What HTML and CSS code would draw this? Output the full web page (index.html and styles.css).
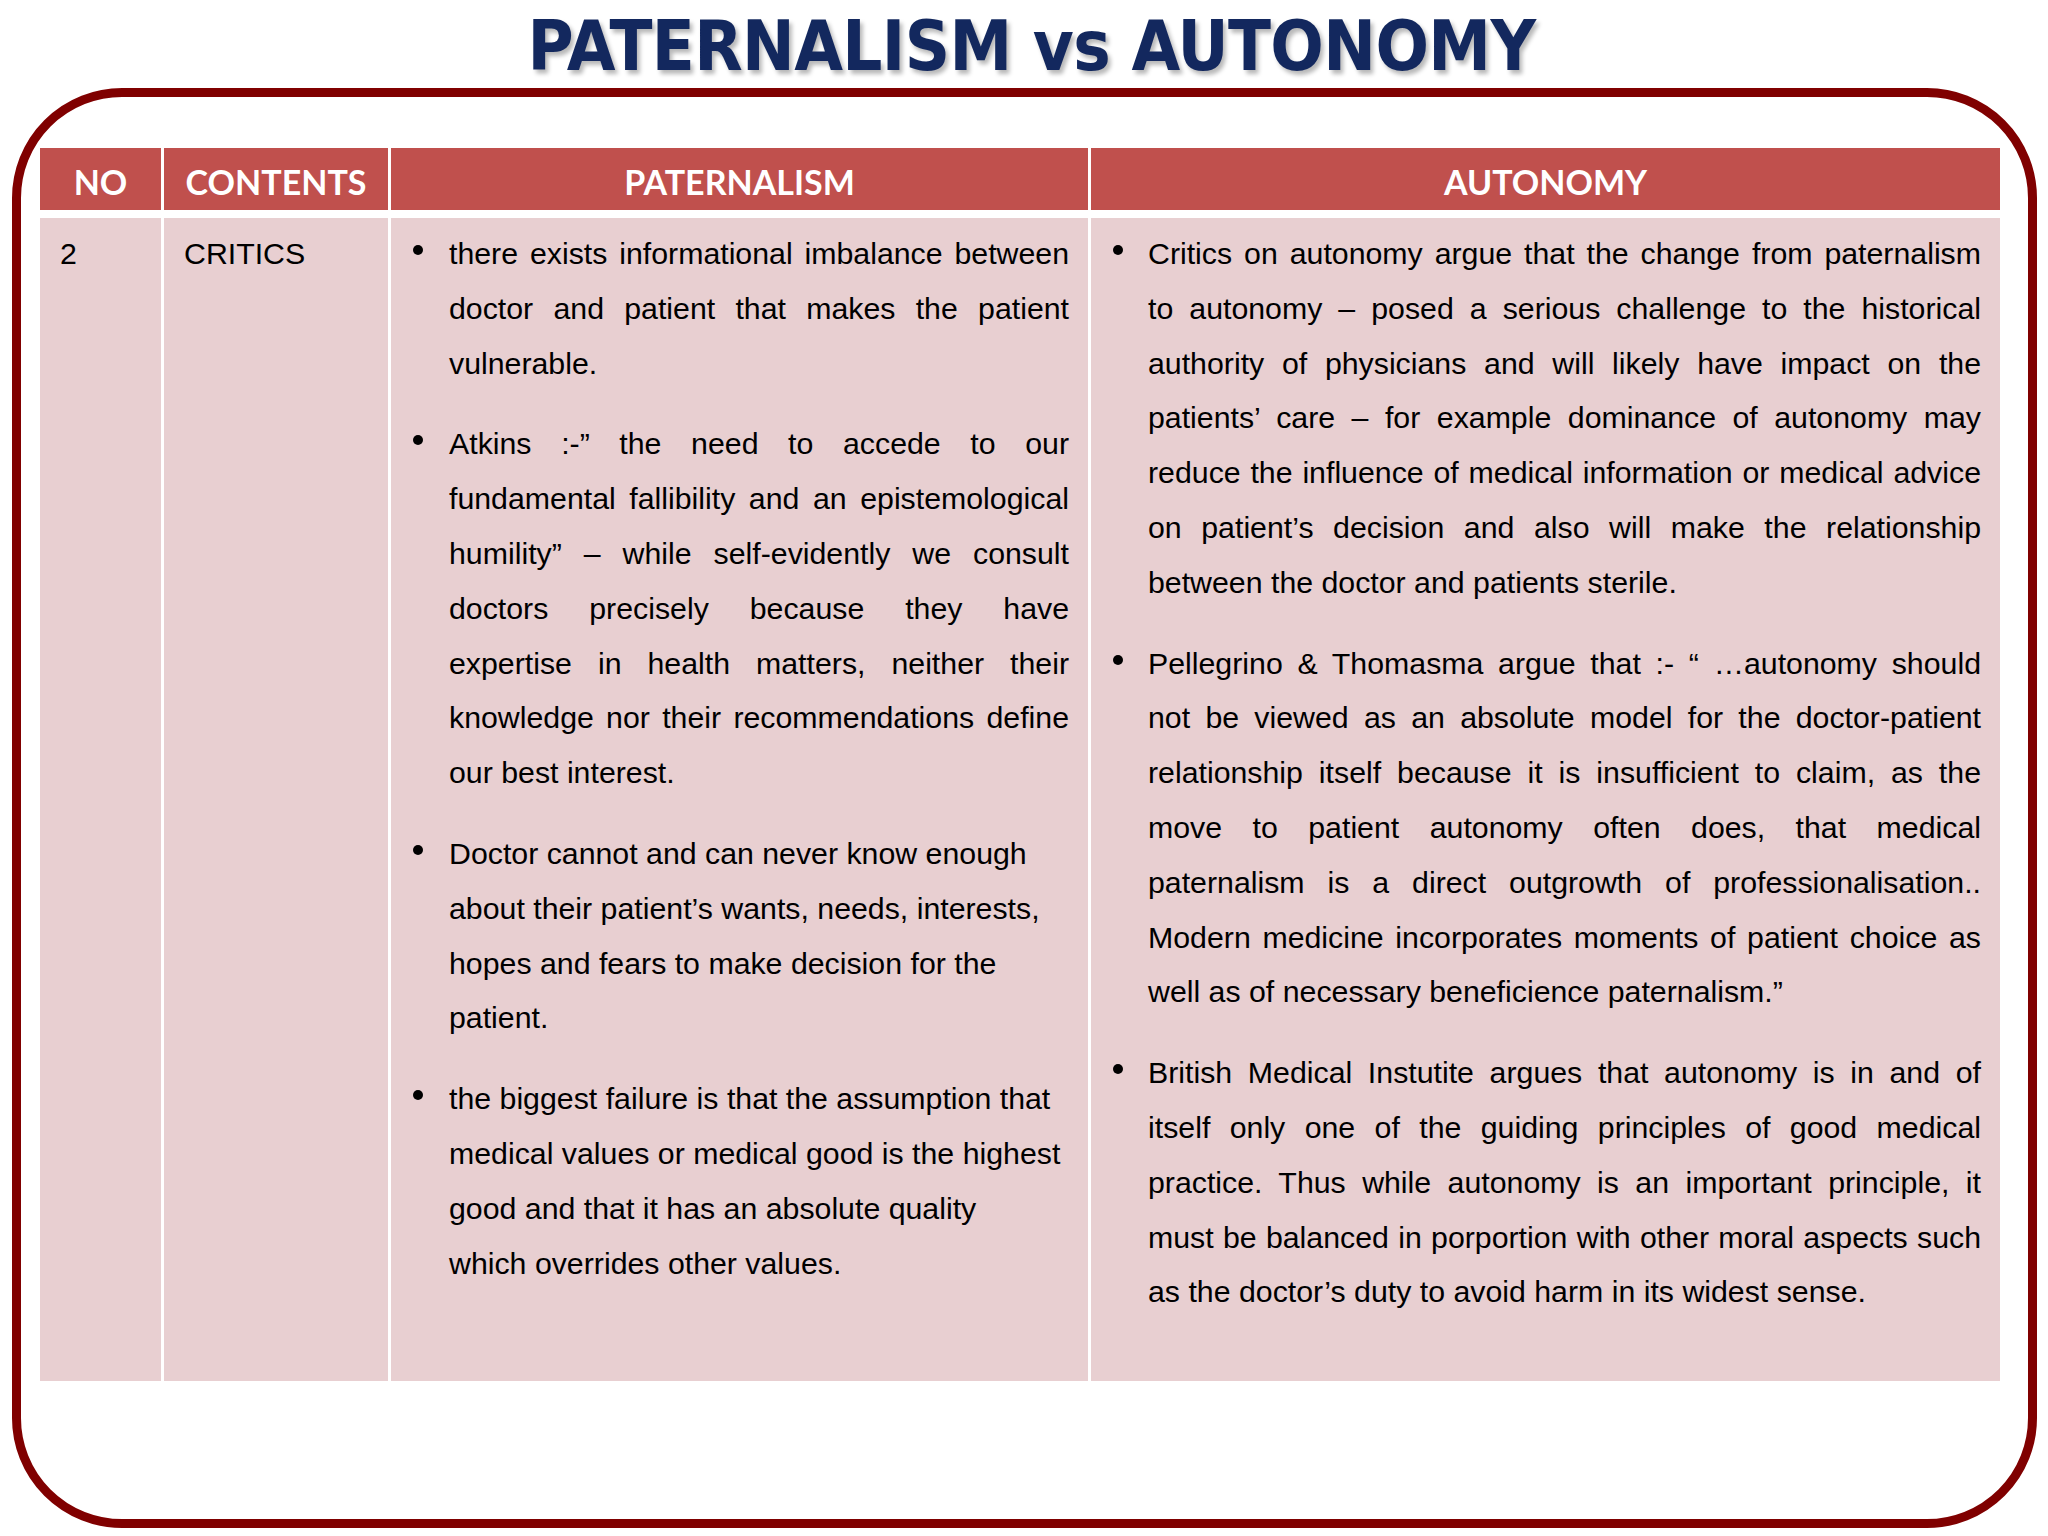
FILE: index.html
```html
<!DOCTYPE html>
<html lang="en">
<head>
<meta charset="utf-8">
<title>Paternalism vs Autonomy</title>
<link rel="stylesheet" href="styles.css">
</head>
<body>
<div class="slide">
  <h1 class="title">PATERNALISM vs AUTONOMY</h1>
  <div class="frame">
    <div class="table">
      <div class="th">NO</div>
      <div class="th">CONTENTS</div>
      <div class="th">PATERNALISM</div>
      <div class="th">AUTONOMY</div>

      <div class="td plain">2</div>
      <div class="td plain">CRITICS</div>

      <div class="td">
        <div class="item"><span class="dot"></span><p class="txt">
          <span class="ln j">there exists informational imbalance between</span>
          <span class="ln j">doctor and patient that makes the patient</span>
          <span class="ln">vulnerable.</span>
        </p></div>
        <div class="item"><span class="dot"></span><p class="txt">
          <span class="ln j">Atkins :-” the need to accede to our</span>
          <span class="ln j">fundamental fallibility and an epistemological</span>
          <span class="ln j">humility” – while self-evidently we consult</span>
          <span class="ln j">doctors precisely because they have</span>
          <span class="ln j">expertise in health matters, neither their</span>
          <span class="ln j">knowledge nor their recommendations define</span>
          <span class="ln">our best interest.</span>
        </p></div>
        <div class="item"><span class="dot"></span><p class="txt">
          <span class="ln">Doctor cannot and can never know enough</span>
          <span class="ln">about their patient’s wants, needs, interests,</span>
          <span class="ln">hopes and fears to make decision for the</span>
          <span class="ln">patient.</span>
        </p></div>
        <div class="item"><span class="dot"></span><p class="txt">
          <span class="ln">the biggest failure is that the assumption that</span>
          <span class="ln">medical values or medical good is the highest</span>
          <span class="ln">good and that it has an absolute quality</span>
          <span class="ln">which overrides other values.</span>
        </p></div>
      </div>

      <div class="td auto">
        <div class="item"><span class="dot"></span><p class="txt">
          <span class="ln j">Critics on autonomy argue that the change from paternalism</span>
          <span class="ln j">to autonomy – posed a serious challenge to the historical</span>
          <span class="ln j">authority of physicians and will likely have impact on the</span>
          <span class="ln j">patients’ care – for example dominance of autonomy may</span>
          <span class="ln j">reduce the influence of medical information or medical advice</span>
          <span class="ln j">on patient’s decision and also will make the relationship</span>
          <span class="ln">between the doctor and patients sterile.</span>
        </p></div>
        <div class="item"><span class="dot"></span><p class="txt">
          <span class="ln j">Pellegrino &amp; Thomasma argue that :- “ …autonomy should</span>
          <span class="ln j">not be viewed as an absolute model for the doctor-patient</span>
          <span class="ln j">relationship itself because it is insufficient to claim, as the</span>
          <span class="ln j">move to patient autonomy often does, that medical</span>
          <span class="ln j">paternalism is a direct outgrowth of professionalisation..</span>
          <span class="ln j">Modern medicine incorporates moments of patient choice as</span>
          <span class="ln">well as of necessary beneficience paternalism.”</span>
        </p></div>
        <div class="item"><span class="dot"></span><p class="txt">
          <span class="ln j">British Medical Instutite argues that autonomy is in and of</span>
          <span class="ln j">itself only one of the guiding principles of good medical</span>
          <span class="ln j">practice. Thus while autonomy is an important principle, it</span>
          <span class="ln j">must be balanced in porportion with other moral aspects such</span>
          <span class="ln">as the doctor’s duty to avoid harm in its widest sense.</span>
        </p></div>
      </div>
    </div>
  </div>
</div>
</body>
</html>
```

FILE: styles.css
```css
html, body {
  margin: 0;
  padding: 0;
  background: #ffffff;
}

.slide {
  width: 2048px;
  height: 1536px;
  overflow: hidden;
  background: #ffffff;
}

.title {
  margin: 0;
  height: 88px;
  box-sizing: border-box;
  padding: 5px 0 0 15px;
  line-height: 83px;
  text-align: center;
  font-family: "DejaVu Sans Condensed", "DejaVu Sans", sans-serif;
  font-stretch: condensed;
  font-weight: bold;
  font-size: 70px;
  letter-spacing: -0.6px;
  color: #13285e;
  text-shadow: 3px 4px 4px rgba(0, 0, 0, 0.28);
}

.frame {
  margin-left: 12px;
  width: 2025px;
  height: 1440px;
  box-sizing: border-box;
  border: 9px solid #800000;
  border-radius: 110px;
  padding: 51px 0 0 19px;
}

.table {
  display: grid;
  grid-template-columns: 121px 224px 697px 909px;
  grid-template-rows: 62px 1163px;
  gap: 8px 3px;
  width: 1963px;
}

.th {
  background: #c0504d;
  color: #ffffff;
  font-family: Lato, "Open Sans", sans-serif;
  font-weight: bold;
  font-size: 34px;
  display: flex;
  align-items: center;
  justify-content: center;
  padding-top: 5px;
  box-sizing: border-box;
}

.td {
  background: #e8cfd1;
  color: #000000;
  font-family: "Liberation Sans", Arial, sans-serif;
  font-size: 30.3px;
  line-height: 54.8px;
  padding: 9px 19px 0 22px;
  box-sizing: border-box;
}

.td.plain {
  padding: 9px 20px 0 20px;
}

.item {
  display: flex;
  align-items: flex-start;
  margin-bottom: 26px;
}

.dot {
  flex: none;
  width: 10px;
  height: 10px;
  border-radius: 50%;
  background: #000000;
  margin-top: 18px;
  margin-right: 26px;
}

.td.auto .dot {
  margin-right: 25px;
}

.txt {
  flex: 1;
  margin: 0;
}

.ln {
  display: block;
  white-space: nowrap;
}

.ln.j {
  text-align: justify;
  text-align-last: justify;
  white-space: normal;
}
```
